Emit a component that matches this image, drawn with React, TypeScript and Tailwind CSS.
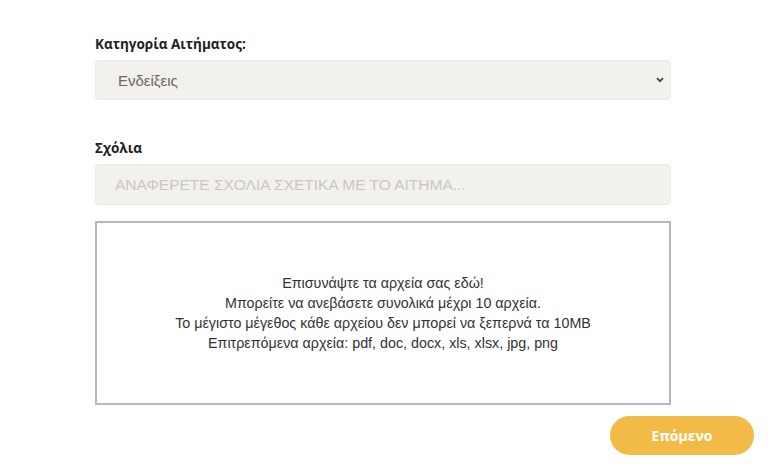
import React from "react";

export default function App() {
  return (
    <div className="w-[768px] h-[470px] bg-white flex flex-col" style={{ fontFamily: '"Liberation Sans", Arial, sans-serif' }}>
      <div className="pl-[95px] pt-[36px] w-[671px] flex flex-col">
        <label className="text-[13.5px] leading-[16px] font-bold text-[#222] font-['Open_Sans',sans-serif]">
          Κατηγορία Αιτήματος:
        </label>
        <div className="mt-[8px] h-[40px] rounded-[4px] bg-[#f2f1ee] border border-[#ebe9e5] flex items-center justify-between pl-[22px] pr-[6px]">
          <span className="text-[15px] text-[#666] pt-[3px]">Ενδείξεις</span>
          <svg width="8" height="6" viewBox="0 0 8 6">
            <path d="M1 1.2 L4 4.2 L7 1.2" fill="none" stroke="#444" strokeWidth="1.8" />
          </svg>
        </div>
        <label className="mt-[40px] text-[13.5px] leading-[16px] font-bold text-[#222] font-['Open_Sans',sans-serif]">
          Σχόλια
        </label>
        <div className="mt-[8px] h-[41px] rounded-[4px] bg-[#f2f1ee] border border-[#ebe9e5] flex items-center pl-[19px]">
          <span className="text-[15.5px] text-[#cbc7c0]">ΑΝΑΦΕΡΕΤΕ ΣΧΟΛΙΑ ΣΧΕΤΙΚΑ ΜΕ ΤΟ ΑΙΤΗΜΑ...</span>
        </div>
        <div className="mt-[16px] h-[184px] border-2 border-[#b8b8b8] flex flex-col items-center justify-center text-[14.3px] leading-[20px] text-[#333] text-center">
          <p>Επισυνάψτε τα αρχεία σας εδώ!</p>
          <p>Μπορείτε να ανεβάσετε συνολικά μέχρι 10 αρχεία.</p>
          <p>Το μέγιστο μέγεθος κάθε αρχείου δεν μπορεί να ξεπερνά τα 10MB</p>
          <p>Επιτρεπόμενα αρχεία: pdf, doc, docx, xls, xlsx, jpg, png</p>
        </div>
      </div>
      <div className="flex justify-end pr-[14px] mt-[11px]">
        <button className="w-[144px] h-[39px] rounded-full bg-[#f2bb47] text-white text-[14px] font-bold font-['Open_Sans',sans-serif]">
          Επόμενο
        </button>
      </div>
    </div>
  );
}
